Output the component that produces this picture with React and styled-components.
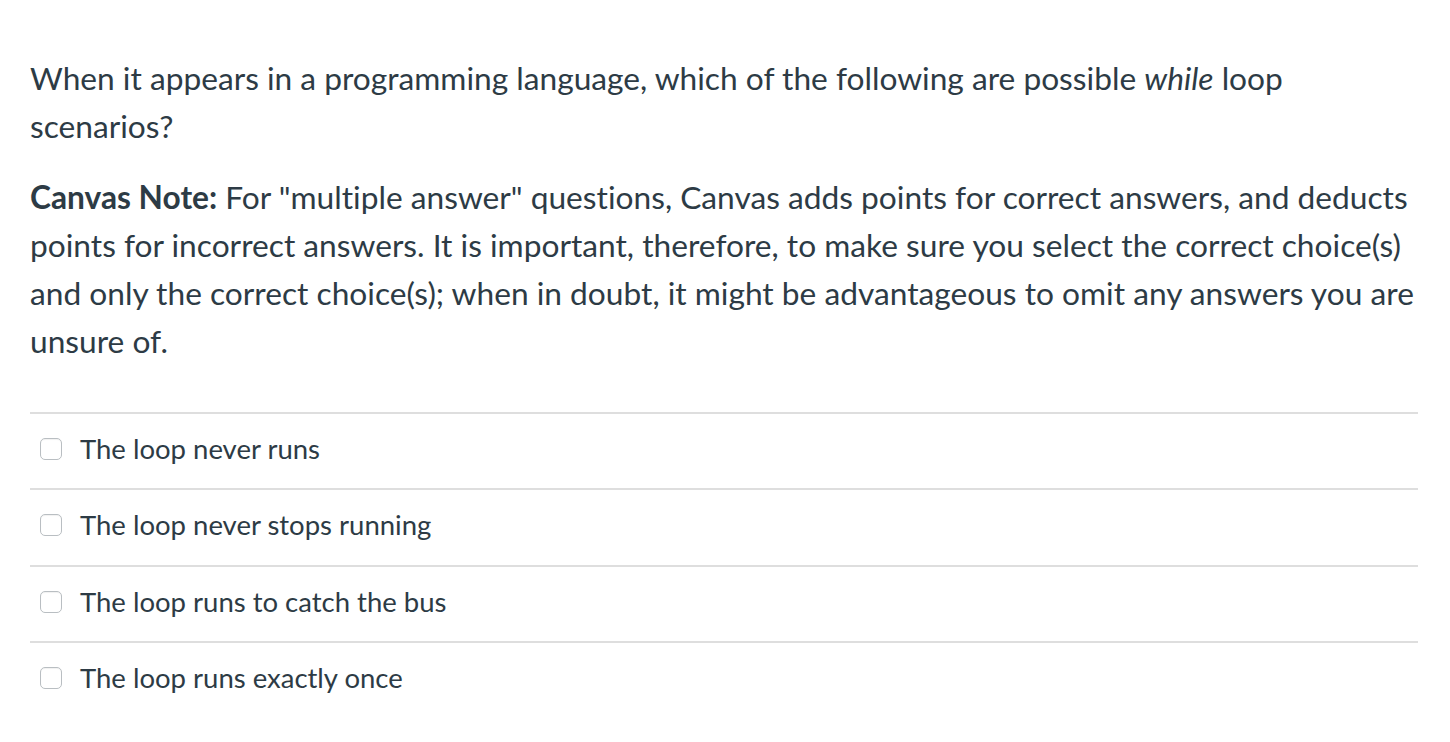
import styled, { createGlobalStyle } from "styled-components";

const GlobalStyle = createGlobalStyle`
  body {
    margin: 0;
    background: #ffffff;
    font-family: Lato, "Noto Sans", sans-serif;
    color: #2d3b45;
    font-variant-ligatures: no-common-ligatures;
  }
`;

const Page = styled.div`
  padding: 54px 32px 0 30px;
`;

const Text = styled.p`
  margin: 0 0 23px;
  font-size: 31.7px;
  line-height: 48px;
`;

const Answers = styled.ul`
  list-style: none;
  margin: 47px 0 0;
  padding: 0;
`;

const Row = styled.li`
  display: flex;
  align-items: center;
  gap: 18px;
  padding: 14px 0 18.3px 10px;
  border-top: 2px solid #dedede;
  font-size: 27.5px;
  line-height: 42px;
`;

const Box = styled.span`
  width: 20px;
  height: 20px;
  border: 1.5px solid #b9bec2;
  border-radius: 5px;
  background: #fff;
  box-shadow: inset 0 1px 1px rgba(0, 0, 0, 0.06);
  flex-shrink: 0;
`;

const options = [
  "The loop never runs",
  "The loop never stops running",
  "The loop runs to catch the bus",
  "The loop runs exactly once",
];

export default function App() {
  return (
    <>
      <GlobalStyle />
      <Page>
        <Text>
          When it appears in a programming language, which of the following are possible <em>while</em> loop scenarios?
        </Text>
        <Text>
          <strong>Canvas Note:</strong> For "multiple answer" questions, Canvas adds points for correct answers, and deducts points for incorrect answers. It is important, therefore, to make sure you select the correct choice(s) and only the correct choice(s); when in doubt, it might be advantageous to omit any answers you are unsure of.
        </Text>
        <Answers>
          {options.map((o) => (
            <Row key={o}>
              <Box />
              {o}
            </Row>
          ))}
        </Answers>
      </Page>
    </>
  );
}
